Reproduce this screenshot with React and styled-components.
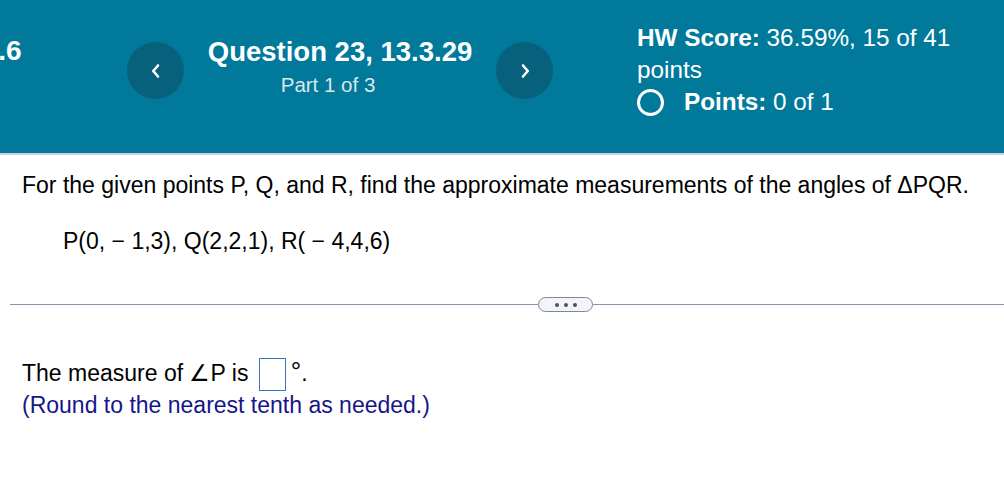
import styled, { createGlobalStyle } from 'styled-components';

const GlobalStyle = createGlobalStyle`
    html, body {
        margin: 0;
        padding: 0;
        background: #ffffff;
        font-family: "Liberation Sans", Arial, sans-serif;
        width: 1004px;
        height: 483px;
        overflow: hidden;
    }
`;

const Header = styled.header`
    display: flex;
    align-items: flex-start;
    height: 153px;
    background-color: #00799b;
    border-bottom: 2px solid #c8cfe0;
    color: #ffffff;
    overflow: hidden;
`;
const Section = styled.div`
    flex: none;
    margin: 35px 0 0 -33px;
    width: 160px;
    font-size: 28px;
    font-weight: bold;
    line-height: 32px;
`;
const NavButton = styled.button`
    flex: none;
    display: flex;
    align-items: center;
    justify-content: center;
    width: 57px;
    height: 57px;
    margin-top: 42px;
    border: none;
    border-radius: 50%;
    background-color: #07617d;
    color: #ffffff;
    padding: 0;
`;
const TitleBlock = styled.div`
    flex: none;
    width: 312px;
    margin-top: 35px;
    text-align: center;
`;
const Title = styled.div`
    font-size: 27.5px;
    font-weight: bold;
    line-height: 34px;
`;
const Sub = styled.div`
    margin-top: 5px;
    padding-right: 24px;
    font-size: 20.5px;
    line-height: 22px;
    color: #d9e6ec;
`;
const Score = styled.div`
    flex: none;
    margin: 22px 0 0 84px;
    width: 350px;
    font-size: 24.3px;
    line-height: 32px;
`;
const PointsRow = styled.div`
    display: flex;
    align-items: center;
    gap: 20px;
    margin-top: 0;
`;
const Ring = styled.span`
    display: inline-block;
    width: 21px;
    height: 21px;
    border: 3px solid #ffffff;
    border-radius: 50%;
`;

const Main = styled.main`
    padding: 15px 0 0 22px;
    font-size: 23px;
    color: #000000;
`;
const Para = styled.p`
    margin: 0;
    line-height: 30px;
`;
const Points = styled.p`
    margin: 26px 0 0 41px;
    line-height: 30px;
`;
const Divider = styled.div`
    display: flex;
    align-items: center;
    margin: 41px 0 0 -12px;
`;
const Line = styled.div`
    height: 1px;
    background: #8b94a8;
    flex: ${p => p.grow ? 1 : 'none'};
    width: ${p => p.w || 'auto'};
`;
const Pill = styled.div`
    display: flex;
    align-items: center;
    justify-content: center;
    gap: 5px;
    width: 53px;
    height: 13px;
    border: 1px solid #7d879a;
    border-radius: 8px;
    background: #f3f4f7;
`;
const Dot = styled.span`
    width: 4px;
    height: 4px;
    border-radius: 50%;
    background: #4b5160;
`;
const Answer = styled.p`
    margin: 42px 0 0 0;
    line-height: 34px;
`;
const InputBox = styled.span`
    display: inline-block;
    width: 25px;
    height: 31px;
    margin-left: 4px;
    border: 1px solid #3d72c9;
    vertical-align: middle;
`;
const Degree = styled.span`
    margin-left: 5px;
    font-size: 26px;
    vertical-align: 1px;
`;
const Note = styled.p`
    margin: 1px 0 0 0;
    line-height: 26px;
    color: #16168a;
`;

const Chevron = ({ dir }) => (
    <svg width="16" height="16" viewBox="0 0 16 16">
        <path
            d={dir === 'left' ? 'M10 2.5 L5.2 8 L10 13.5' : 'M6 2.5 L10.8 8 L6 13.5'}
            fill="none"
            stroke="#ffffff"
            strokeWidth="2.6"
            strokeLinecap="round"
            strokeLinejoin="round"
        />
    </svg>
);

const App = () => {
    return (
        <>
            <GlobalStyle />
            <Header>
                <Section>13.6</Section>
                <NavButton aria-label="Previous question"><Chevron dir="left" /></NavButton>
                <TitleBlock>
                    <Title>Question 23, 13.3.29</Title>
                    <Sub>Part 1 of 3</Sub>
                </TitleBlock>
                <NavButton aria-label="Next question"><Chevron dir="right" /></NavButton>
                <Score>
                    <div><b>HW Score:</b> 36.59%, 15 of 41<br />points</div>
                    <PointsRow>
                        <Ring />
                        <span><b>Points:</b> 0 of 1</span>
                    </PointsRow>
                </Score>
            </Header>
            <Main>
                <Para>For the given points P, Q, and R, find the approximate measurements of the angles of ΔPQR.</Para>
                <Points>P(0, − 1,3), Q(2,2,1), R( − 4,4,6)</Points>
                <Divider>
                    <Line w="528px" />
                    <Pill><Dot /><Dot /><Dot /></Pill>
                    <Line grow />
                </Divider>
                <Answer>
                    The measure of ∠P is <InputBox /><Degree>°</Degree>.
                </Answer>
                <Note>(Round to the nearest tenth as needed.)</Note>
            </Main>
        </>
    );
}

export default App;
